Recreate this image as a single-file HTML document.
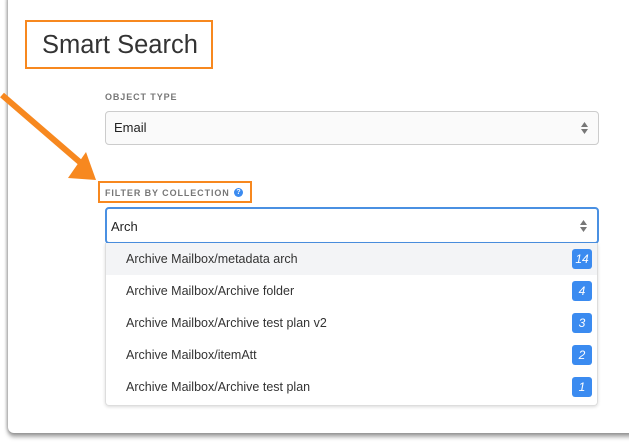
<!DOCTYPE html>
<html><head><style>
body{margin:0;width:629px;height:443px;background:#fff;position:relative;overflow:hidden;font-family:"Liberation Sans",sans-serif;}
.card{position:absolute;left:8px;top:-10px;width:640px;height:443px;background:#fff;box-shadow:-1px 0 3px rgba(0,0,0,.25),0 4px 4px rgba(0,0,0,.35);border-radius:6px;}
.tbox{position:absolute;left:25px;top:20px;width:184px;height:45px;border:2.5px solid #f7881f;}
.title{position:absolute;left:42px;top:31px;font-size:25.5px;color:#333;}
.lbl{position:absolute;font-size:9px;font-weight:bold;letter-spacing:0.9px;color:#777;}
.sel{position:absolute;left:105px;width:494px;border:1px solid #ccc;border-radius:4px;background:#fafafa;font-size:13px;color:#222;box-sizing:border-box;padding-left:8px;}
.arr{position:absolute;right:10px;top:50%;transform:translateY(-50%);width:7px;}
.dd{position:absolute;left:105px;top:243px;width:493px;height:163px;border:1px solid #ddd;border-top:none;box-sizing:border-box;box-shadow:0 1px 3px rgba(0,0,0,.15);border-radius:0 0 4px 4px;}
.row{position:absolute;left:0;width:100%;height:32px;font-size:12.5px;color:#333;line-height:32px;padding-left:20px;box-sizing:border-box;}
.b{position:absolute;right:5px;top:6px;background:#3b8bf0;color:#fff;font-style:italic;font-size:12px;line-height:20px;height:20px;border-radius:3px;text-align:center;min-width:16px;padding:0 2px;}
</style></head><body>
<div class="card"></div>
<div class="tbox"></div>
<div class="title">Smart Search</div>
<div class="lbl" style="left:105px;top:92px">OBJECT TYPE</div>
<div class="sel" style="top:111px;height:34px;line-height:32px">Email<svg class="arr" viewBox="0 0 7 12" height="12"><path d="M0 5L3.5 0L7 5Z M0 7L3.5 12L7 7Z" fill="#777"/></svg></div>
<div style="position:absolute;left:98px;top:181px;width:150px;height:18px;border:2.5px solid #f7881f"></div>
<div class="lbl" style="left:105px;top:188px">FILTER BY COLLECTION</div>
<div style="position:absolute;left:234px;top:188px;width:9px;height:9px;border-radius:50%;background:#3b8bf0;color:#fff;font-size:7px;font-weight:bold;text-align:center;line-height:9px">?</div>
<div class="sel" style="top:207px;height:37px;line-height:35px;border:2px solid #4a90e2;background:#fff;padding-left:4px">Arch<svg class="arr" viewBox="0 0 7 12" height="12"><path d="M0 5L3.5 0L7 5Z M0 7L3.5 12L7 7Z" fill="#777"/></svg></div>
<div class="dd">
<div class="row" style="top:0;background:#f3f4f6">Archive Mailbox/metadata arch<span class="b">14</span></div>
<div class="row" style="top:32px">Archive Mailbox/Archive folder<span class="b">4</span></div>
<div class="row" style="top:64px">Archive Mailbox/Archive test plan v2<span class="b">3</span></div>
<div class="row" style="top:96px">Archive Mailbox/itemAtt<span class="b">2</span></div>
<div class="row" style="top:128px">Archive Mailbox/Archive test plan<span class="b">1</span></div>
</div>
<svg style="position:absolute;left:0;top:0" width="110" height="200"><path d="M2 95L82 164" stroke="#f7881f" stroke-width="6"/><path d="M68 178L96 180L86 152Z" fill="#f7881f"/></svg>
</body></html>
